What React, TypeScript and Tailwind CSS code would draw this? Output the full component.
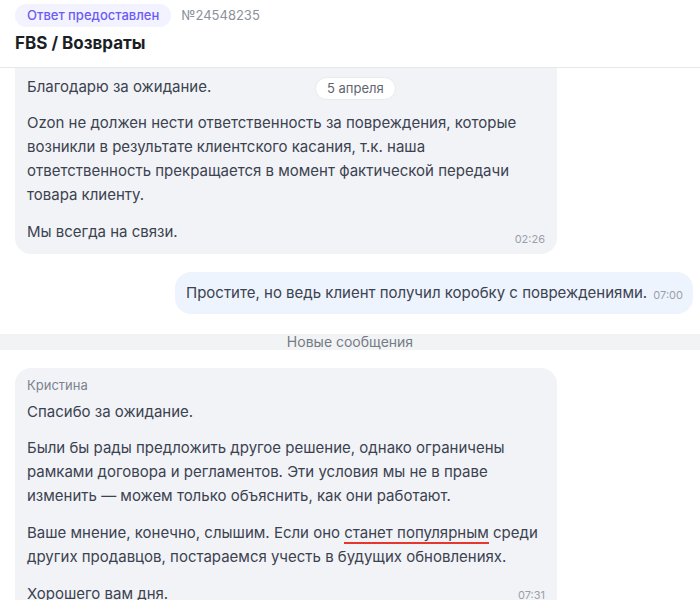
export default function App() {
  return (
    <div className="w-[700px] h-[612px] bg-white overflow-hidden flex flex-col font-['Inter','Noto_Sans',sans-serif] text-[#3b4250]">
      <header className="h-[68px] shrink-0 border-b border-[#e6e8ec] px-[15px] pt-[4px] bg-white relative z-10">
        <div className="flex items-center gap-[10px]">
          <span className="h-[23px] px-[12px] rounded-full bg-[#f3f2ff] text-[#6b5cf5] text-[13px] font-medium flex items-center">
            Ответ предоставлен
          </span>
          <span className="text-[13px] text-[#8c919b]">№24548235</span>
        </div>
        <h1 className="mt-[4px] text-[17px] leading-[24px] font-bold text-[#1b1e25]">FBS / Возвраты</h1>
      </header>

      <div className="relative h-[532px] shrink-0 overflow-hidden">
        <div className="absolute left-[315px] top-[9px] z-10 h-[23px] px-[11px] rounded-full bg-white border border-[#e8eaee] text-[13px] text-[#5f6571] flex items-center">
          5 апреля
        </div>

        <div className="flex flex-col -mt-[25px]">
          {/* входящее, обрезано сверху */}
          <div className="ml-[15px] w-[542px] rounded-[16px] bg-[#f2f3f7] px-[12px] pt-[8px] pb-[10px]">
            <div className="text-[13px] leading-[18px] text-[#7c828d]">Кристина</div>
            <p className="mt-[6px] text-[15px] leading-[24px]">Благодарю за ожидание.</p>
            <p className="mt-[12px] text-[15px] leading-[24px] whitespace-nowrap">
              Ozon не должен нести ответственность за повреждения, которые
              <br />
              возникли в результате клиентского касания, т.к. наша
              <br />
              ответственность прекращается в момент фактической передачи
              <br />
              товара клиенту.
            </p>
            <div className="mt-[13px] flex items-end justify-between">
              <p className="text-[15px] leading-[24px]">Мы всегда на связи.</p>
              <span className="text-[11px] leading-[16px] text-[#9aa0a9] mb-[-3px]">02:26</span>
            </div>
          </div>

          {/* исходящее */}
          <div className="mt-[18px] self-end mr-[7px] w-[518px] h-[42px] rounded-[16px] bg-[#eef4fd] pl-[11px] pr-[10px] flex items-center justify-between">
            <span className="text-[15px] leading-[24px] whitespace-nowrap">Простите, но ведь клиент получил коробку с повреждениями.</span>
            <span className="text-[11px] text-[#9aa0a9] mt-[4px]">07:00</span>
          </div>

          <div className="mt-[20px] h-[16px] bg-[#f2f3f5] flex items-center justify-center text-[14px] leading-[16px] text-[#757b86]">
            Новые сообщения
          </div>

          <div className="mt-[18px] ml-[15px] w-[542px] rounded-[16px] bg-[#f2f3f7] px-[12px] pt-[8px] pb-[10px]">
            <div className="text-[13px] leading-[18px] text-[#7c828d]">Кристина</div>
            <p className="mt-[6px] text-[15px] leading-[24px]">Спасибо за ожидание.</p>
            <p className="mt-[12px] text-[15px] leading-[24px] whitespace-nowrap">
              Были бы рады предложить другое решение, однако ограничены
              <br />
              рамками договора и регламентов. Эти условия мы не в праве
              <br />
              изменить — можем только объяснить, как они работают.
            </p>
            <p className="mt-[13px] text-[15px] leading-[24px] whitespace-nowrap">
              Ваше мнение, конечно, слышим. Если оно{" "}
              <span className="border-b-2 border-[#e5372f]">станет популярным</span> среди
              <br />
              других продавцов, постараемся учесть в будущих обновлениях.
            </p>
            <div className="mt-[13px] flex items-end justify-between">
              <p className="text-[15px] leading-[24px]">Хорошего вам дня.</p>
              <span className="text-[11px] leading-[16px] text-[#9aa0a9] mb-[3px]">07:31</span>
            </div>
          </div>
        </div>
      </div>
    </div>
  );
}
